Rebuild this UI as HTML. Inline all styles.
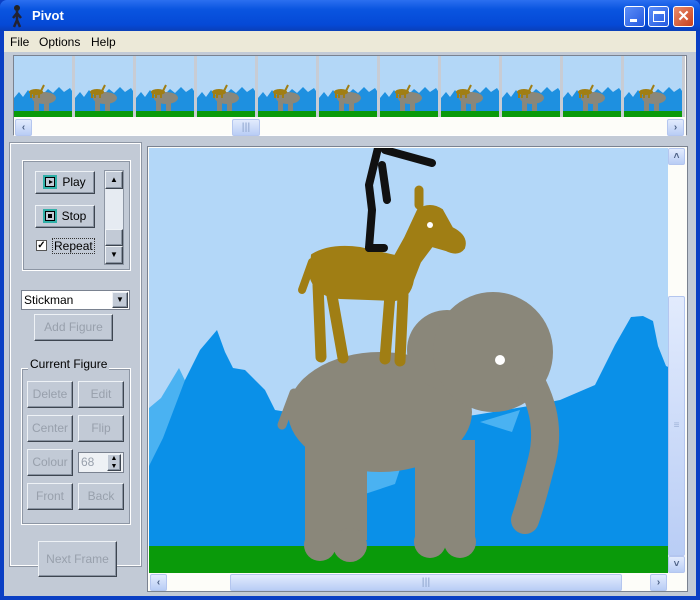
<!DOCTYPE html>
<html><head><style>
*{margin:0;padding:0;box-sizing:border-box}
body{width:700px;height:600px;overflow:hidden;font-family:"Liberation Sans",sans-serif;font-size:12px;background:#0a3fc4;position:relative}
.a{position:absolute}
.title{left:0;top:0;width:700px;height:31px;background:linear-gradient(#2b6ff0,#0a55e0 30%,#0549d6 80%,#0a3fb8);border-radius:7px 7px 0 0}
.tb{top:6px;width:21px;height:21px;border:1px solid #fff;border-radius:3px;background:linear-gradient(135deg,#5c8ef8,#2459e0)}
.menu{left:4px;top:31px;width:692px;height:21px;background:#ece9d8}
.menu span{position:absolute;top:4px;font-size:12px}
.body{left:4px;top:52px;width:692px;height:544px;background:#c2cad6}
.btn{position:absolute;background:#c2cad6;border:1px solid;border-color:#eef2f6 #3d4550 #3d4550 #eef2f6;box-shadow:inset -1px -1px 0 #8a94a2;color:#98a0ac;text-align:center;font-size:12px}
.grp{position:absolute;border:1px solid #fff;outline:1px solid #8d96a4;outline-offset:-2px}
.sb{position:absolute;background:#fdfdf9}
.arr{position:absolute;width:17px;height:17px;background:linear-gradient(#e2ebfd,#b9cdf5);border:1px solid #b4c6ef;border-radius:2px;color:#4d6185;font-size:10px;text-align:center;line-height:15px;font-weight:bold}
</style></head><body>
<div class="a title"></div>
<svg class="a" style="left:10px;top:4px" width="14" height="24"><circle cx="7" cy="4" r="3" fill="#222"/><path d="M7 7v9M7 16l-3 7M7 16l3 7M7 9l-4 5M7 9l4 5" stroke="#223" stroke-width="2.5"/></svg>
<div class="a" style="left:32px;top:8px;color:#fff;font-weight:bold;font-size:13px">Pivot</div>
<div class="a tb" style="left:624px"><div class="a" style="left:5px;top:12px;width:7px;height:3px;background:#fff"></div></div>
<div class="a tb" style="left:648px"><div class="a" style="left:4px;top:4px;width:12px;height:11px;border:1px solid #fff;border-top:3px solid #fff"></div></div>
<div class="a tb" style="left:673px;background:linear-gradient(135deg,#e88c6c,#c9401c);color:#fff;font-weight:bold;font-size:15px;text-align:center;line-height:19px">✕</div>
<div class="a menu"><span style="left:6px">File</span><span style="left:35px">Options</span><span style="left:87px">Help</span></div>
<div class="a body"></div>
<div class="a" style="left:13px;top:55px;width:674px;height:81px;background:#fdfdf9;border:1px solid #7a8290;border-bottom-color:#fff"></div>
<svg class="a" style="left:14px;top:56px" width="672" height="61">
<defs><g id="t"><rect width="58" height="61" fill="#b3d7f7"/><path d="M0 42l5-6 4 5 5-7 4 5 5-4 6 3 5-5 5 4 6-6 5 5 6-4 2 3V61H0z" fill="#1e90e0"/><rect y="55" width="58" height="6" fill="#0a9a0a"/><ellipse cx="30" cy="42" rx="12" ry="6" fill="#8a877a"/><rect x="20" y="42" width="5" height="13" fill="#8a877a"/><rect x="30" y="42" width="5" height="13" fill="#8a877a"/><ellipse cx="22" cy="36" rx="7" ry="3" fill="#a07e14"/><path d="M27 35l3-6M17 37v5M20 37v5M25 37v5" stroke="#a07e14" stroke-width="2"/></g></defs>
<use href="#t" x="0"/><use href="#t" x="61"/><use href="#t" x="122"/><use href="#t" x="183"/><use href="#t" x="244"/><use href="#t" x="305"/><use href="#t" x="366"/><use href="#t" x="427"/><use href="#t" x="488"/><use href="#t" x="549"/><use href="#t" x="610"/>
<rect x="58" width="3" height="61" fill="#c8ccd4"/><rect x="119" width="3" height="61" fill="#c8ccd4"/><rect x="180" width="3" height="61" fill="#c8ccd4"/><rect x="241" width="3" height="61" fill="#c8ccd4"/><rect x="302" width="3" height="61" fill="#c8ccd4"/><rect x="363" width="3" height="61" fill="#c8ccd4"/><rect x="424" width="3" height="61" fill="#c8ccd4"/><rect x="485" width="3" height="61" fill="#c8ccd4"/><rect x="546" width="3" height="61" fill="#c8ccd4"/><rect x="607" width="3" height="61" fill="#c8ccd4"/><rect x="668" width="3" height="61" fill="#c8ccd4"/>
</svg>
<div class="arr" style="left:15px;top:119px">‹</div>
<div class="arr" style="left:232px;top:119px;width:28px;color:#9fb3d8">|||</div>
<div class="arr" style="left:667px;top:119px">›</div>
<div class="a" style="left:10px;top:143px;width:131px;height:423px;border:1px solid #fff;outline:1px solid #8d96a4"></div>
<div class="grp" style="left:22px;top:160px;width:109px;height:111px"></div>
<div class="btn" style="left:35px;top:171px;width:60px;height:23px;color:#000;line-height:21px;padding-left:18px">Play</div>
<div class="a" style="left:45px;top:177px;width:10px;height:10px;border:1px solid #000;outline:2px solid #30b0a8"><div class="a" style="left:3px;top:2px;border-left:4px solid #000;border-top:2px solid transparent;border-bottom:2px solid transparent"></div></div>
<div class="btn" style="left:35px;top:205px;width:60px;height:23px;color:#000;line-height:21px;padding-left:18px">Stop</div>
<div class="a" style="left:45px;top:211px;width:10px;height:10px;border:1px solid #000;outline:2px solid #30b0a8"><div class="a" style="left:2px;top:2px;width:4px;height:4px;background:#000"></div></div>
<div class="a" style="left:36px;top:240px;width:11px;height:11px;background:#fff;border:1px solid #555;font-size:10px;line-height:9px;text-align:center;font-weight:bold">✓</div>
<div class="a" style="left:52px;top:238px;border:1px dotted #333;padding:0 1px;font-size:12px">Repeat</div>
<div class="a" style="left:104px;top:170px;width:20px;height:95px;background:#e6ebf2;border:1px solid #8d96a4"></div>
<div class="btn" style="left:105px;top:171px;width:18px;height:18px;color:#000;font-size:8px;line-height:16px">▲</div>
<div class="btn" style="left:105px;top:229px;width:18px;height:17px"></div>
<div class="btn" style="left:105px;top:246px;width:18px;height:18px;color:#000;font-size:8px;line-height:16px">▼</div>
<div class="a" style="left:21px;top:290px;width:109px;height:20px;background:#fff;border:1px solid #7a8290;padding:2px 2px;font-size:12px">Stickman</div>
<div class="btn" style="left:112px;top:292px;width:16px;height:16px;color:#000;font-size:8px;line-height:14px">▼</div>
<div class="btn" style="left:34px;top:314px;width:79px;height:27px;line-height:25px">Add Figure</div>
<div class="grp" style="left:21px;top:368px;width:110px;height:157px"></div>
<div class="a" style="left:28px;top:357px;background:#c2cad6;padding:0 2px;font-size:12px">Current Figure</div>
<div class="btn" style="left:27px;top:381px;width:46px;height:27px;line-height:25px">Delete</div>
<div class="btn" style="left:78px;top:381px;width:46px;height:27px;line-height:25px">Edit</div>
<div class="btn" style="left:27px;top:415px;width:46px;height:27px;line-height:25px">Center</div>
<div class="btn" style="left:78px;top:415px;width:46px;height:27px;line-height:25px">Flip</div>
<div class="btn" style="left:27px;top:449px;width:46px;height:27px;line-height:25px">Colour</div>
<div class="a" style="left:78px;top:452px;width:46px;height:21px;background:#eef1f5;border:1px solid #7a8290;color:#98a0ac;padding:2px 2px">68</div>
<div class="btn" style="left:107px;top:454px;width:14px;height:17px;color:#000;font-size:7px;line-height:8px">▲<br>▼</div>
<div class="btn" style="left:27px;top:483px;width:46px;height:27px;line-height:25px">Front</div>
<div class="btn" style="left:78px;top:483px;width:46px;height:27px;line-height:25px">Back</div>
<div class="btn" style="left:38px;top:541px;width:79px;height:36px;line-height:34px">Next Frame</div>
<div class="a" style="left:147px;top:146px;width:541px;height:446px;border:1px solid #7a8290;background:#fdfdf9"></div>
<svg class="a" style="left:149px;top:148px" width="519" height="425" viewBox="149 148 519 425">
<rect x="149" y="148" width="519" height="425" fill="#b3d7f8"/>
<path d="M149 470V408l12-10 18-30 12 25 20 25 60 15V480z" fill="#4ab2f2"/>
<path d="M149 466l14-28 22-58 15-30 17-20 8 22 8 16 12 2 20 20 10 20 60 10 100 0 40-5 60-10 25-5 35-15 20-40 16-28 12-1 10 5 5 25 8 20 12 5 10-15 10-5 7 4V548H149z" fill="#0a90e8"/>
<path d="M355 480l25-18 25-8-10 30-30 10z" fill="#4ab2f2"/>
<path d="M480 422l40-12-8 22z" fill="#4ab2f2"/>
<rect x="149" y="546" width="519" height="27" fill="#0a9a0a"/>
<g fill="#8a877a" stroke="#8a877a">
<ellipse cx="380" cy="412" rx="92" ry="60" stroke="none"/>
<circle cx="447" cy="350" r="40" stroke="none"/>
<circle cx="493" cy="352" r="60" stroke="none"/>
<path d="M282 425l12-32" stroke-width="9" stroke-linecap="round"/>
<path d="M530 380q22 40 12 80t-17 60" stroke-width="28" fill="none" stroke-linecap="round"/>
<rect x="305" y="440" width="62" height="100" stroke="none"/>
<circle cx="320" cy="545" r="16" stroke="none"/><circle cx="350" cy="545" r="17" stroke="none"/>
<rect x="415" y="440" width="60" height="100" stroke="none"/>
<circle cx="430" cy="542" r="16" stroke="none"/><circle cx="460" cy="542" r="16" stroke="none"/>
</g>
<circle cx="500" cy="360" r="5" fill="#fff"/>
<g stroke="#a07e14" stroke-linecap="round" stroke-linejoin="round" fill="#a07e14">
<path d="M312 255 Q330 244 360 248 L395 256 L405 238 L418 210 Q430 202 442 210 L452 228 Q468 236 464 248 Q458 256 446 250 L432 246 L420 262 L413 280 Q410 298 395 300 L340 298 Q315 296 310 275z" stroke-width="2"/>
<path d="M312 262l-10 28" stroke-width="8"/>
<path d="M419 190v15" stroke-width="9"/>
<path d="M318 285l3 72M331 290l12 68M390 295l-5 64M403 295l-3 66" stroke-width="11"/>
</g>
<circle cx="430" cy="225" r="3" fill="#fff"/>
<g stroke="#111" stroke-width="8" fill="none" stroke-linecap="round" stroke-linejoin="round">
<path d="M378 148l-9 37 3 25-3 38"/><path d="M382 165l5 35"/><path d="M385 150l47 13"/><path d="M369 248h15"/>
</g>
</svg>
<div class="sb" style="left:668px;top:148px;width:18px;height:425px"></div>
<div class="arr" style="left:668px;top:148px">˄</div>
<div class="arr" style="left:668px;top:296px;height:260px;color:#9fb3d8;line-height:258px">≡</div>
<div class="arr" style="left:668px;top:556px">˅</div>
<div class="sb" style="left:149px;top:573px;width:519px;height:18px"></div>
<div class="arr" style="left:150px;top:574px">‹</div>
<div class="arr" style="left:230px;top:574px;width:392px;color:#9fb3d8">|||</div>
<div class="arr" style="left:650px;top:574px">›</div>
</body></html>
